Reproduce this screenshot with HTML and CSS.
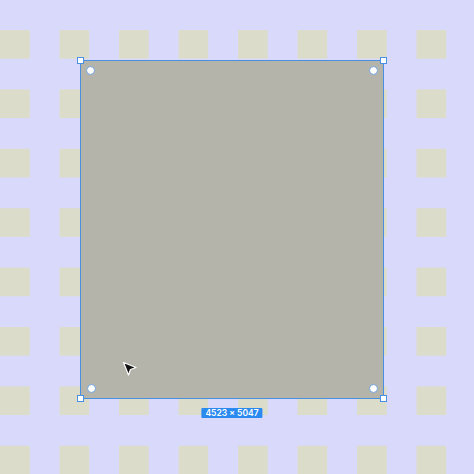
FILE: index.html
```html
<!DOCTYPE html>
<html>
<head>
<meta charset="utf-8">
<link rel="stylesheet" href="styles.css">
</head>
<body>
<div class="canvas">
  <div class="frame">
    <span class="handle tl"></span>
    <span class="handle tr"></span>
    <span class="handle bl"></span>
    <span class="handle br"></span>
    <span class="dot dtl"></span>
    <span class="dot dtr"></span>
    <span class="dot dbl"></span>
    <span class="dot dbr"></span>
    <div class="size">4523 × 5047</div>
  </div>
  <svg class="cursor" width="16" height="16" viewBox="0 0 16 16">
    <path d="M1.5 1.5 L14 6.5 L8.5 8.5 L6.5 14 Z" fill="#111" stroke="#fff" stroke-width="1.2" stroke-linejoin="round"/>
  </svg>
</div>
</body>
</html>
```
FILE: styles.css
```css
html, body {
  margin: 0;
  padding: 0;
}
.canvas {
  position: relative;
  width: 474px;
  height: 474px;
  overflow: hidden;
  background-color: #d9d9fc;
  background-image: conic-gradient(at 29.5px 29px, #d9d9fc 0 75%, #dcdccb 75% 100%);
  background-size: 59.5px 59.4px;
  background-position: 0 30px;
  font-family: "Inter", "Liberation Sans", sans-serif;
}
.frame {
  position: absolute;
  left: 80px;
  top: 60px;
  width: 302px;
  height: 337px;
  background: #b4b4ab;
  border: 1.5px solid #4a90e2;
}
.handle {
  position: absolute;
  width: 5px;
  height: 5px;
  background: #fff;
  border: 1px solid #4a90e2;
}
.tl { left: -4px; top: -4px; }
.tr { right: -4px; top: -4px; }
.bl { left: -4px; bottom: -4px; }
.br { right: -4px; bottom: -4px; }
.dot {
  position: absolute;
  width: 7px;
  height: 7px;
  border-radius: 50%;
  background: #fff;
  border: 1px solid #6f9fd8;
}
.dtl { left: 5px; top: 5px; }
.dtr { right: 5px; top: 5px; }
.dbl { left: 6px; bottom: 5px; }
.dbr { right: 5px; bottom: 5px; }
.size {
  position: absolute;
  left: 50%;
  top: 100%;
  margin-top: 10px;
  transform: translateX(-50%);
  background: #2b8af0;
  color: #fff;
  font-size: 8.5px;
  font-weight: 600;
  line-height: 10px;
  padding: 0 4px;
  border-radius: 1px;
  white-space: nowrap;
}
.cursor {
  position: absolute;
  left: 122px;
  top: 361px;
}
```
